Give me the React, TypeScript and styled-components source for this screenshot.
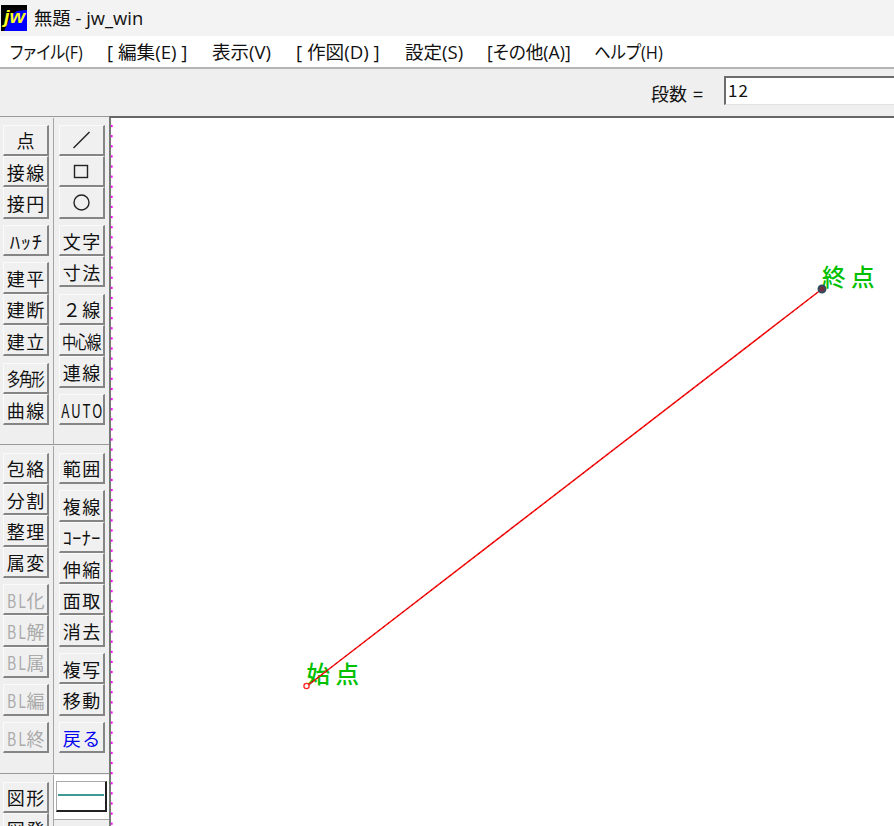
import React from "react";
import styled, { createGlobalStyle } from "styled-components";

const GlobalStyle = createGlobalStyle`
  html, body { margin: 0; padding: 0; overflow: hidden; }
  body { background: #fff; }
  * { box-sizing: border-box; }
`;

const Window = styled.div`
  width: 894px;
  height: 826px;
  display: flex;
  flex-direction: column;
  overflow: hidden;
  background: #fff;
  color: #111;
  font-family: "Noto Sans CJK JP", sans-serif;
`;

const TitleBar = styled.header`
  flex: none;
  height: 36px;
  display: flex;
  align-items: center;
  padding-left: 1px;
  background: #f3f3f3;
`;

const AppIcon = styled.svg`
  flex: none;
  width: 26px;
  height: 26px;
  margin-right: 7px;
`;

const Title = styled.h1`
  margin: 0;
  font: 400 18px/30px "Open Sans", "Noto Sans CJK JP", sans-serif;
  white-space: pre;
  transform: scaleX(1.02);
  transform-origin: left;
`;

const MenuBar = styled.nav`
  flex: none;
  height: 31px;
  display: flex;
  align-items: center;
  gap: 24px;
  padding-left: 10px;
`;

const MenuItem = styled.div<{ $width: number }>`
  flex: none;
  width: ${(p) => p.$width}px;
  font: 400 18px/30px "Open Sans", "Noto Sans CJK JP", sans-serif;
  white-space: pre;
`;

const MenuText = styled.span<{ $scale: number }>`
  display: inline-block;
  font-feature-settings: "palt";
  transform: scaleX(${(p) => p.$scale});
  transform-origin: left;
`;

const OptionBar = styled.div`
  flex: none;
  height: 49px;
  display: flex;
  justify-content: flex-end;
  padding-top: 7px;
  background: #efefef;
  border-top: 2px solid #b4b4b4;
`;

const FieldLabel = styled.label`
  width: 73px;
  padding-top: 2px;
  font-size: 18px;
  line-height: 30px;
  white-space: pre;
  word-spacing: 2px;
`;

const Field = styled.div`
  width: 170px;
  height: 29px;
  padding-left: 2px;
  background: #fff;
  border-top: 2px solid #6c6c6c;
  border-left: 2px solid #6c6c6c;
  border-bottom: 1px solid #e2e2e2;
  font-size: 17px;
  line-height: 23px;
  letter-spacing: 1px;
`;

const Workspace = styled.main`
  flex: 1;
  min-height: 0;
  display: flex;
`;

const Tools = styled.aside`
  flex: none;
  width: 109px;
  display: flex;
  flex-direction: column;
  background: #efefef;
`;

const Section = styled.section<{ $height: number }>`
  flex: none;
  height: ${(p) => p.$height}px;
  display: flex;
  border-top: 1px solid #999;
  overflow: hidden;
`;

const ToolColumn = styled.div<{ $first?: boolean; $plain?: boolean }>`
  width: ${(p) => (p.$first ? 54 : 55)}px;
  height: ${(p) => (p.$plain ? "45px" : "auto")};
  margin-top: 1px;
  padding: ${(p) => (p.$plain ? "6px 0 0 2px" : p.$first ? "6.7px 0 0 3px" : "6.7px 0 0 5px")};
  display: flex;
  flex-direction: column;
  gap: 6.3px;
  border-right: ${(p) => (p.$first ? "1px solid #a5a5a5" : "0")};
  border-bottom: ${(p) => (p.$plain ? "1px solid #aaa" : "0")};
  background: ${(p) => (p.$plain ? "#fff" : "transparent")};
`;

const Group = styled.div`
  flex: none;
  display: flex;
  flex-direction: column;
`;

const ToolButton = styled.div<{ $tone?: string }>`
  flex: none;
  width: 46px;
  height: 31.3px;
  display: flex;
  align-items: center;
  justify-content: center;
  background: #f0f0f0;
  border: 1px solid #fafafa;
  border-right: 2px solid #858585;
  border-bottom: 2px solid #858585;
  color: ${(p) => (p.$tone === "off" ? "#aaa" : p.$tone === "back" ? "#0000f0" : "#111")};
`;

const Caption = styled.span<{ $spacing: number; $scale: number }>`
  flex: none;
  display: flex;
  margin-top: 1px;
  margin-right: ${(p) => -p.$spacing}px;
  font-size: 18px;
  line-height: 24px;
  white-space: nowrap;
  letter-spacing: ${(p) => p.$spacing}px;
  transform: scaleX(${(p) => p.$scale});
`;

const Prefix = styled.span`
  width: 20px;
  letter-spacing: 2.5px;
  transform: scaleX(0.78);
  transform-origin: left;
`;

const LineStyleBox = styled.div`
  width: 51px;
  height: 31px;
  display: flex;
  align-items: center;
  padding: 0 1px 2px;
  background: #fff;
  border: 1px solid #aaa;
  border-right: 2px solid #222;
  border-bottom: 2px solid #222;
`;

const LineSample = styled.div`
  width: 100%;
  height: 2px;
  background: #3f9995;
`;

const Drawing = styled.div`
  flex: 1;
  border-top: 2px solid #666;
  border-left: 2px solid #777;
`;

const Sheet = styled.svg`
  display: block;
  width: 783px;
  height: 708px;
`;

const PointName = styled.text`
  font: 500 23.5px "Noto Sans CJK JP", sans-serif;
  letter-spacing: 5.5px;
  fill: #00c000;
`;

const sections = [
  {
    height: 328,
    left: [["点", "接線", "接円"], ["ﾊｯﾁ"], ["建平", "建断", "建立"], ["多角形", "曲線"]],
    right: [["／", "□", "○"], ["文字", "寸法"], ["２線", "中心線", "連線"], ["AUTO"]],
  },
  {
    height: 329,
    left: [["包絡", "分割", "整理", "属変"], ["BL化", "BL解", "BL属"], ["BL編"], ["BL終"]],
    right: [["範囲"], ["複線", "ｺｰﾅｰ", "伸縮", "面取", "消去"], ["複写", "移動"], ["戻る"]],
  },
];

const shapes: Record<string, React.ReactNode> = {
  "／": <path d="M1.5 18 17.5 2" />,
  "□": <rect x="2.5" y="4.5" width="13" height="12" />,
  "○": <circle cx="9.5" cy="10.5" r="7.5" />,
};

const fits: Record<string, { spacing: number; scale: number }> = {
  "中心線": { spacing: -2, scale: 0.79 },
  "多角形": { spacing: -2, scale: 0.76 },
  AUTO: { spacing: 2.5, scale: 0.75 },
  "ﾊｯﾁ": { spacing: 0.5, scale: 1.15 },
  "ｺｰﾅｰ": { spacing: 0.5, scale: 1 },
};
const plainFit = { spacing: 1.5, scale: 1 };

function Tool({ name }: { name: string }) {
  const disabled = name.startsWith("BL");
  const tone = disabled ? "off" : name === "戻る" ? "back" : undefined;
  const fit = fits[name] ?? plainFit;
  return (
    <ToolButton $tone={tone}>
      {shapes[name] ? (
        <svg width="20" height="20" fill="none" stroke="#222" strokeWidth="1.4" aria-label={name}>
          {shapes[name]}
        </svg>
      ) : (
        <Caption $spacing={fit.spacing} $scale={fit.scale}>
          {disabled && <Prefix>BL</Prefix>}
          {disabled ? name.slice(2) : name}
        </Caption>
      )}
    </ToolButton>
  );
}

function Column({ groups, first }: { groups: string[][]; first?: boolean }) {
  return (
    <ToolColumn $first={first}>
      {groups.map((group) => (
        <Group key={group[0]}>
          {group.map((name) => <Tool key={name} name={name} />)}
        </Group>
      ))}
    </ToolColumn>
  );
}

const menus = [
  { text: "ファイル(F)", width: 73, scale: 0.885 },
  { text: "[ 編集(E) ]", width: 81, scale: 1.035 },
  { text: "表示(V)", width: 60, scale: 1.03 },
  { text: "[ 作図(D) ]", width: 85, scale: 1.035 },
  { text: "設定(S)", width: 58, scale: 1.03 },
  { text: "[その他(A)]", width: 83, scale: 0.98 },
  { text: "ヘルプ(H)", width: 70, scale: 0.91 },
];

const marginDots = Array.from({ length: 70 }, (_, i) => 8 + i * 10.11);

export default function App() {
  return (
    <>
      <GlobalStyle />
      <Window>
        <TitleBar>
          <AppIcon viewBox="0 0 26 26">
            <rect width="26" height="26" fill="#000" />
            <path d="M26 5V26H3L6 20 10 10 16 6Z" fill="#00f" />
            <text x="3" y="18" fill="#ffff20" fontFamily="Liberation Sans" fontWeight="700" fontStyle="italic" fontSize="19" textLength="21" lengthAdjust="spacingAndGlyphs">jw</text>
          </AppIcon>
          <Title>無題 - jw_win</Title>
        </TitleBar>
        <MenuBar>
          {menus.map((m) => (
            <MenuItem key={m.text} $width={m.width}>
              <MenuText $scale={m.scale}>{m.text}</MenuText>
            </MenuItem>
          ))}
        </MenuBar>
        <OptionBar>
          <FieldLabel>段数 =</FieldLabel>
          <Field>12</Field>
        </OptionBar>
        <Workspace>
          <Tools>
            {sections.map((s) => (
              <Section key={s.height} $height={s.height}>
                <Column groups={s.left} first />
                <Column groups={s.right} />
              </Section>
            ))}
            <Section $height={54}>
              <Column groups={[["図形", "図登"]]} first />
              <ToolColumn $plain>
                <LineStyleBox><LineSample /></LineStyleBox>
              </ToolColumn>
            </Section>
          </Tools>
          <Drawing>
            <Sheet viewBox="111 118 783 708">
              {marginDots.map((y) => (
                <rect key={y} x="111" y={y + 117} width="1.6" height="2.2" fill="#f0f" />
              ))}
              <PointName x="306.5" y="683">始点</PointName>
              <PointName x="822" y="286">終点</PointName>
              <path d="M307 686 822 289" stroke="#ff1010" strokeWidth="1.5" />
              <path d="M307 686 822 289" stroke="#b00000" strokeWidth="1" strokeDasharray="2 4" />
              <circle cx="306.5" cy="686" r="2.6" fill="#fff" stroke="#f22" strokeWidth="1.3" />
              <circle cx="822" cy="289" r="3.6" fill="#703040" stroke="#285060" strokeWidth="1.8" />
            </Sheet>
          </Drawing>
        </Workspace>
      </Window>
    </>
  );
}
